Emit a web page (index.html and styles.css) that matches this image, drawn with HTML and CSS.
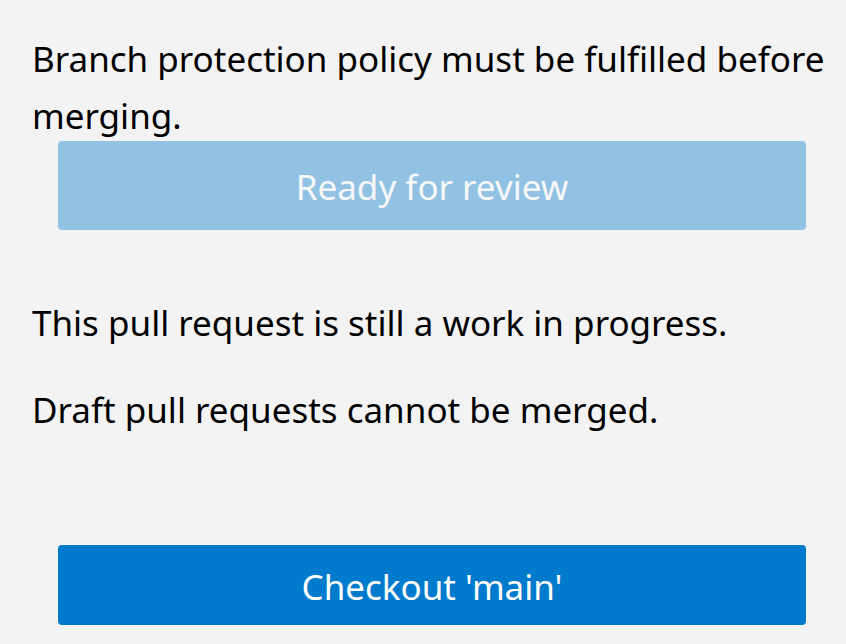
FILE: index.html
```html
<!DOCTYPE html>
<html lang="en">
<head>
    <meta charset="UTF-8">
    <meta name="viewport" content="width=device-width, initial-scale=1.0">
    <title>Pull Request Status</title>
    <link rel="stylesheet" href="styles.css">
</head>
<body>
    <div class="status-panel">
        <div class="status-block">
            <p class="status-text">Branch protection policy must be fulfilled before merging.</p>
            <button class="action-button ready-button" disabled>Ready for review</button>
        </div>

        <div class="status-block draft-block">
            <p class="status-text">This pull request is still a work in progress.</p>
            <p class="status-text draft-note">Draft pull requests cannot be merged.</p>
        </div>

        <button class="action-button checkout-button">Checkout 'main'</button>
    </div>
</body>
</html>
```

FILE: styles.css
```css
body {
    margin: 0;
    background-color: #f3f3f3;
    color: #000;
    font-family: "Noto Sans", "Open Sans", sans-serif;
    font-size: 35px;
}

.status-panel {
    display: flex;
    flex-direction: column;
    width: 800px;
    padding: 30px 14px 0 32px;
}

.status-block {
    display: flex;
    flex-direction: column;
}

.status-text {
    margin: 0;
    line-height: 57px;
}

.action-button {
    display: block;
    margin: 0 26px;
    border: none;
    border-radius: 4px;
    padding: 3px 0 0;
    font-family: inherit;
    font-size: inherit;
    color: #fff;
    background-color: #007acc;
    cursor: pointer;
}

.ready-button {
    margin-top: -3px;
    height: 89px;
    line-height: 86px;
    opacity: 0.4;
    cursor: default;
}

.draft-block {
    margin-top: 64px;
}

.draft-note {
    margin-top: 30px;
}

.checkout-button {
    margin-top: 107px;
    height: 80px;
    line-height: 77px;
}
```
